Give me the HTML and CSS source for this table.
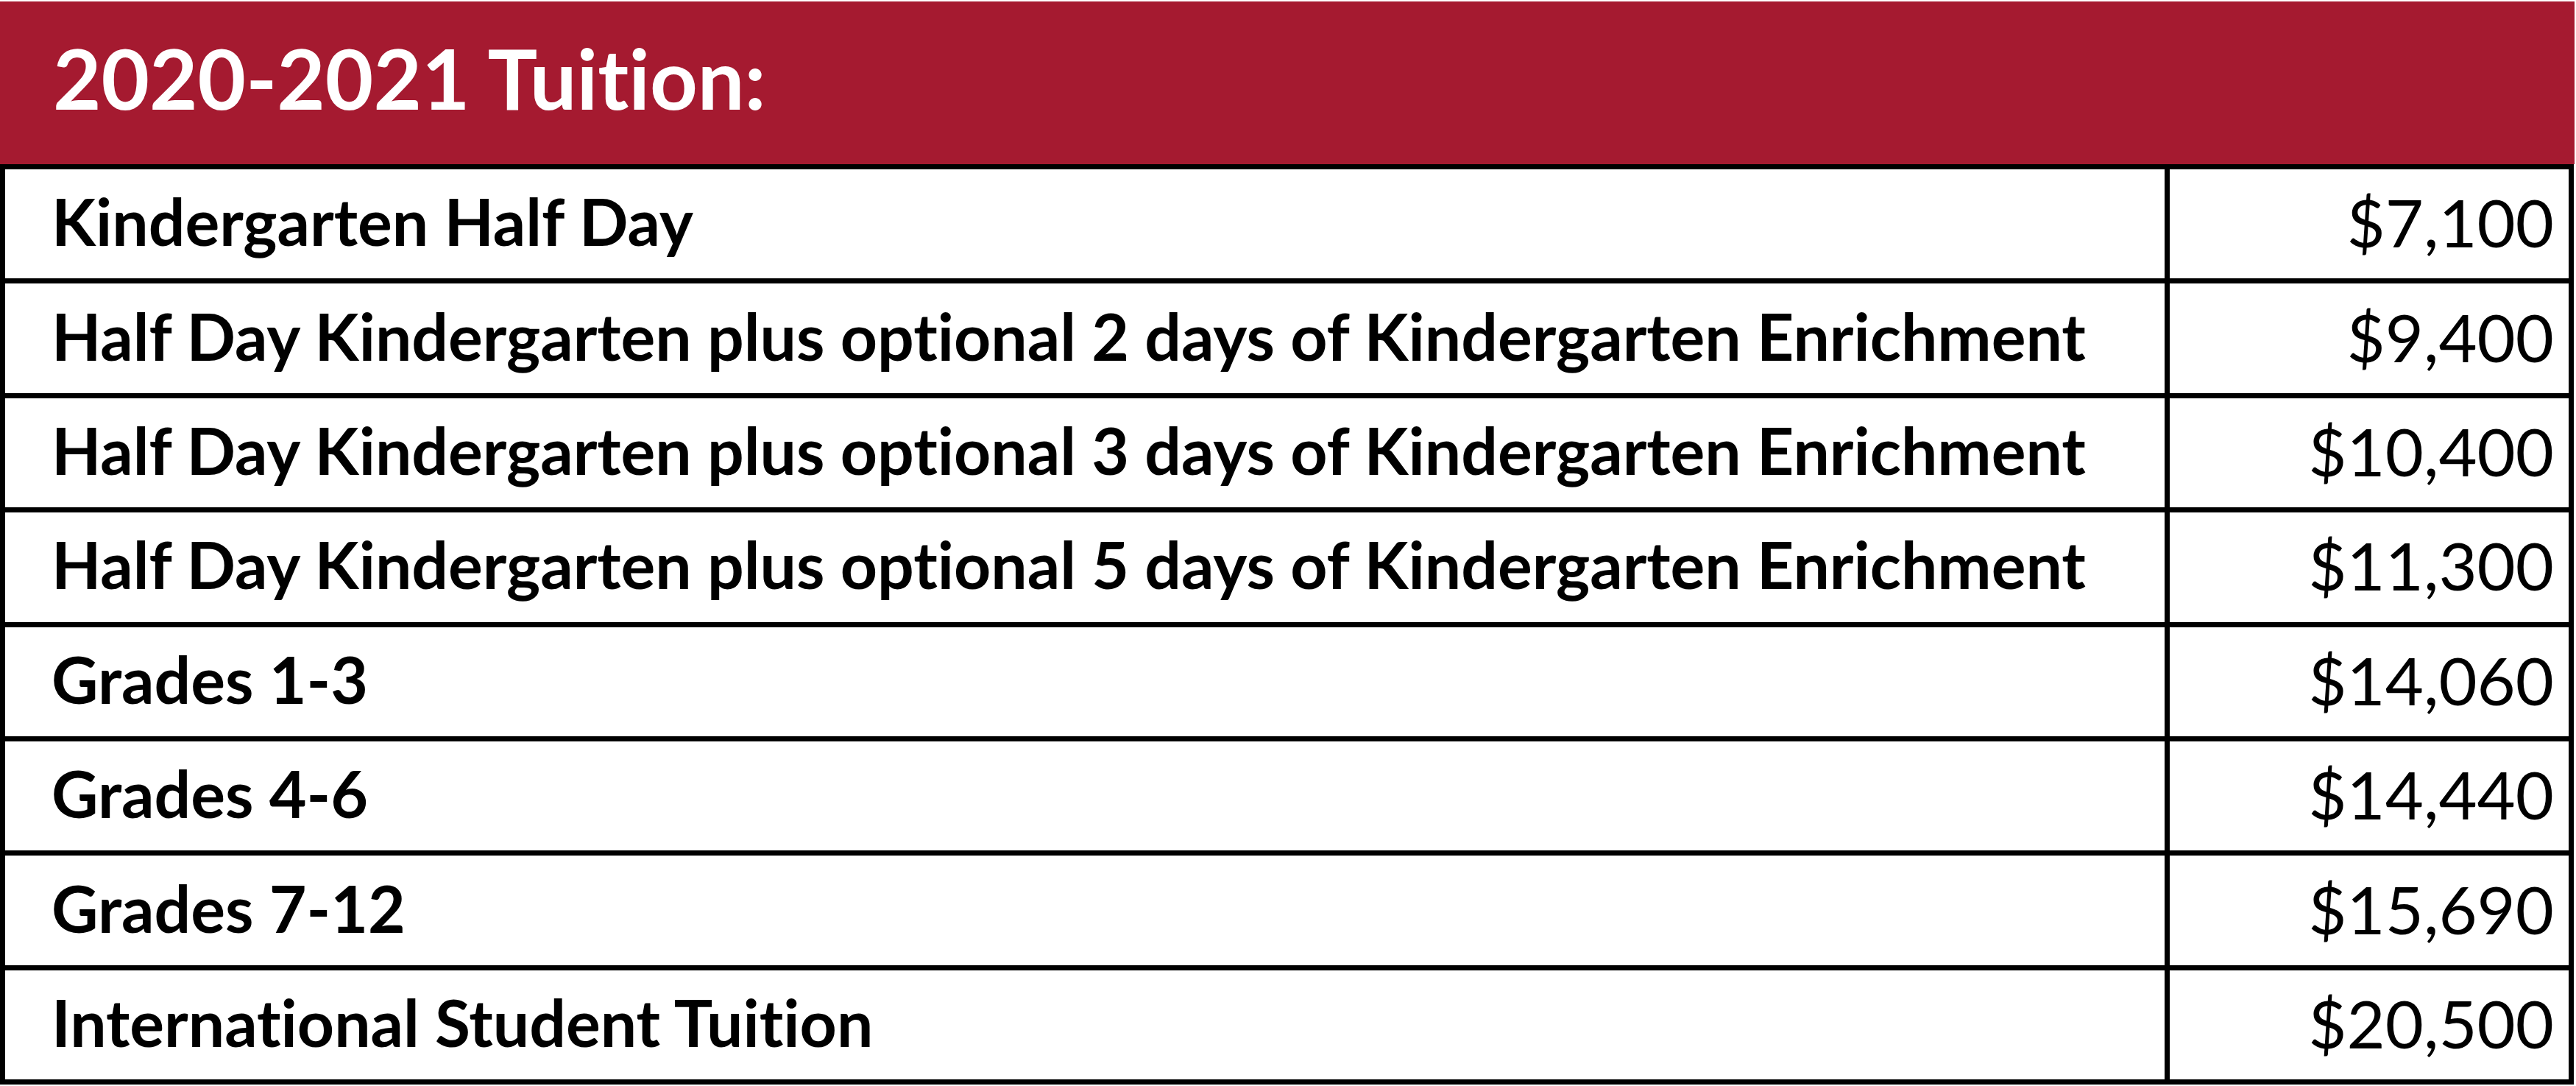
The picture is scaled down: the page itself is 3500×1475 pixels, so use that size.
FILE: index.html
```html
<!DOCTYPE html>
<html lang="en">
<head>
<meta charset="utf-8">
<title>2020-2021 Tuition</title>
<link rel="stylesheet" href="styles.css">
</head>
<body>
<div class="page">
  <div class="header"><h1 class="title">2020-2021 Tuition:</h1></div>
  <div class="grid">
    <div class="cell label">Kindergarten Half Day</div>
    <div class="cell price">$7,100</div>
    <div class="cell label">Half Day Kindergarten plus optional 2 days of Kindergarten Enrichment</div>
    <div class="cell price">$9,400</div>
    <div class="cell label">Half Day Kindergarten plus optional 3 days of Kindergarten Enrichment</div>
    <div class="cell price">$10,400</div>
    <div class="cell label">Half Day Kindergarten plus optional 5 days of Kindergarten Enrichment</div>
    <div class="cell price">$11,300</div>
    <div class="cell label">Grades 1-3</div>
    <div class="cell price">$14,060</div>
    <div class="cell label">Grades 4-6</div>
    <div class="cell price">$14,440</div>
    <div class="cell label">Grades 7-12</div>
    <div class="cell price">$15,690</div>
    <div class="cell label">International Student Tuition</div>
    <div class="cell price">$20,500</div>
  </div>
</div>
</body>
</html>
```

FILE: styles.css
```css
html, body {
  margin: 0;
  padding: 0;
  background: #ffffff;
}

.page {
  width: 3498px;
  padding-top: 2px;
  font-variant-ligatures: none;
  font-feature-settings: "liga" 0;
}

.header {
  box-sizing: border-box;
  height: 221px;
  background: #a51a30;
  padding: 47px 0 0 72px;
}

.title {
  margin: 0;
  font-family: Lato, "Liberation Sans", sans-serif;
  font-weight: 700;
  font-size: 113px;
  line-height: 113px;
  color: #ffffff;
}

.grid {
  width: 3497px;
  box-sizing: border-box;
  display: grid;
  grid-template-columns: 2934px 542px;
  grid-auto-rows: 148.4px;
  gap: 7px;
  padding: 7px;
  background: #000000;
}

.cell {
  background: #ffffff;
  display: flex;
  align-items: center;
  box-sizing: border-box;
  padding-bottom: 6px;
  color: #000000;
  white-space: nowrap;
}

.label {
  padding-left: 63px;
  font-family: Lato, "Liberation Sans", sans-serif;
  font-weight: 700;
  font-size: 87.6px;
  line-height: 88px;
}

.price {
  justify-content: flex-end;
  padding-right: 20px;
  font-family: Lato, "Liberation Sans", sans-serif;
  font-weight: 400;
  font-size: 90px;
  line-height: 90px;
}
```
